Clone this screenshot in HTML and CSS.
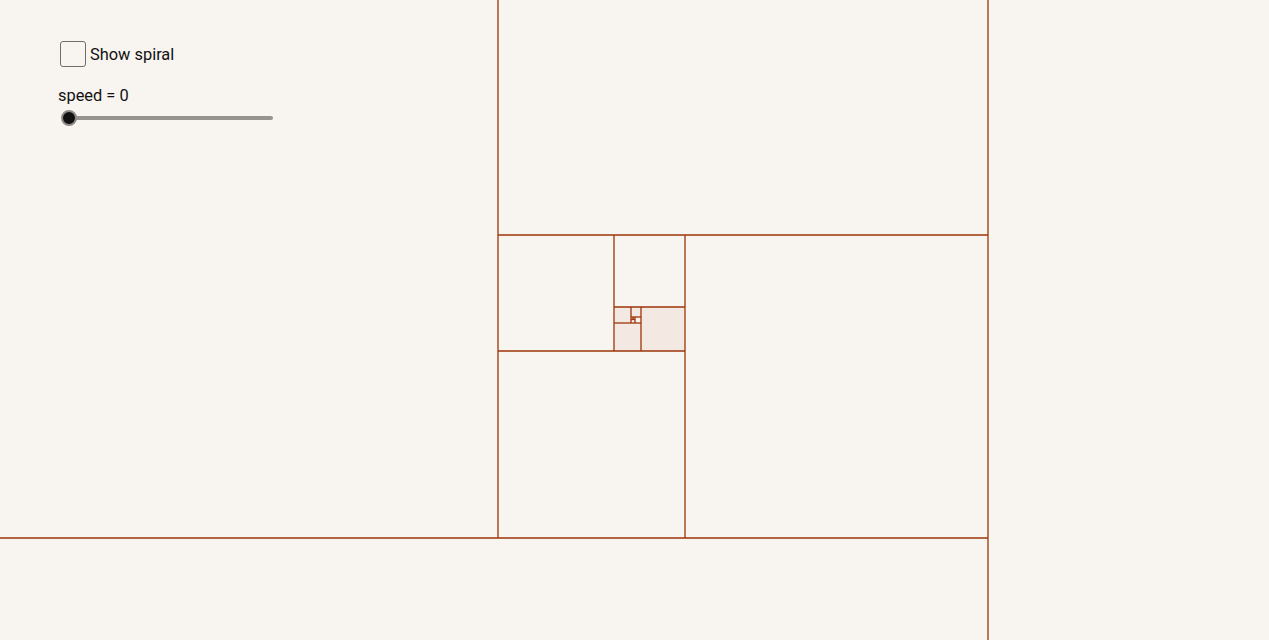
FILE: index.html
```html
<!DOCTYPE html>
<html>
<head>
<meta charset="utf-8">
<link rel="stylesheet" href="styles.css">
</head>
<body>
<div class="stage">
  <svg class="canvas" width="1269" height="640" viewBox="0 0 1269 640">
    <g class="fills">
      <rect x="641" y="307" width="44" height="44"/>
      <rect x="614" y="323" width="27" height="28"/>
      <rect x="614" y="307" width="17" height="16"/>
      <rect x="631" y="307" width="10" height="10"/>
    </g>
    <g class="lines">
      <line x1="498" y1="0" x2="498" y2="538"/>
      <line x1="988" y1="0" x2="988" y2="640"/>
      <line x1="0" y1="538" x2="988" y2="538"/>
      <line x1="498" y1="235" x2="988" y2="235"/>
      <line x1="685" y1="235" x2="685" y2="538"/>
      <line x1="498" y1="351" x2="685" y2="351"/>
      <line x1="614" y1="235" x2="614" y2="351"/>
      <line x1="614" y1="307" x2="685" y2="307"/>
      <line x1="641" y1="307" x2="641" y2="351"/>
      <line x1="614" y1="323" x2="641" y2="323"/>
      <line x1="631" y1="307" x2="631" y2="323"/>
      <line x1="631" y1="317" x2="641" y2="317"/>
      <line x1="635" y1="317" x2="635" y2="323"/>
      <line x1="631" y1="319.5" x2="635" y2="319.5"/>
      <line x1="633" y1="317" x2="633" y2="319.5"/>
    </g>
  </svg>
  <div class="controls">
    <label class="check">
      <span class="box"></span>
      <span class="check-label">Show spiral</span>
    </label>
    <div class="slider">
      <div class="slider-label">speed = 0</div>
      <div class="track">
        <span class="knob"></span>
      </div>
    </div>
  </div>
</div>
</body>
</html>
```
FILE: styles.css
```css
html, body {
  margin: 0;
  padding: 0;
  background: #f8f4f0;
}
.stage {
  position: relative;
  width: 1269px;
  height: 640px;
  overflow: hidden;
  background: #f8f4f0;
  font-family: Roboto, "Liberation Sans", sans-serif;
}
.canvas {
  position: absolute;
  left: 0;
  top: 0;
}
.fills rect {
  fill: #f4e8e2;
}
.lines line {
  stroke: #9c3508;
  stroke-width: 1.3;
}
.controls {
  position: absolute;
  left: 58px;
  top: 40px;
  display: flex;
  flex-direction: column;
}
.check {
  display: flex;
  align-items: center;
  gap: 4px;
  margin-left: 2px;
}
.box {
  width: 26px;
  height: 26px;
  border: 1px solid #6e6e6e;
  border-radius: 3px;
  box-sizing: border-box;
}
.check-label {
  font-size: 16.4px;
  color: #111;
  line-height: 26px;
  padding-top: 2px;
}
.slider {
  margin-top: 19px;
}
.slider-label {
  font-size: 16.4px;
  color: #111;
  line-height: 18px;
}
.track {
  position: relative;
  margin-top: 11px;
  margin-left: 6px;
  width: 209px;
  height: 4px;
  background: #979391;
  border-radius: 2px;
}
.knob {
  position: absolute;
  left: -3.5px;
  top: -6.5px;
  width: 12px;
  height: 12px;
  border-radius: 50%;
  background: #111;
  border: 2.5px solid #8d8a88;
}
```
